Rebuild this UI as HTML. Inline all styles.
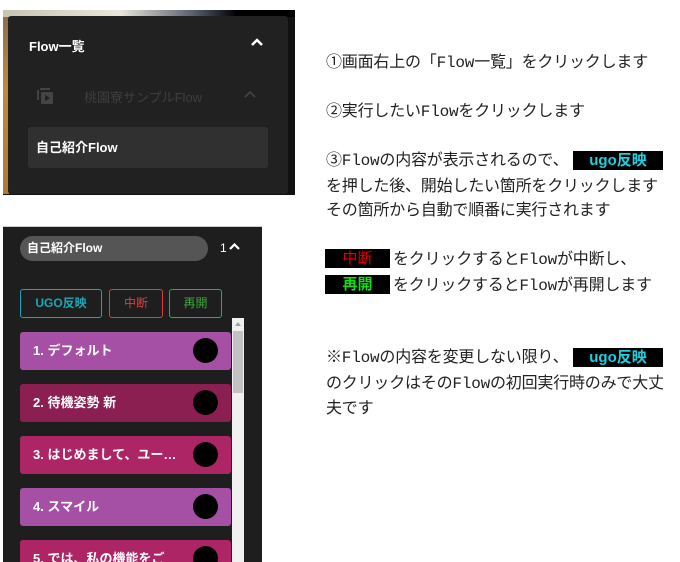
<!DOCTYPE html>
<html><head><meta charset="utf-8"><style>
*{margin:0;padding:0;box-sizing:border-box}
html,body{width:680px;height:562px;overflow:hidden}
body{background:#fff;position:relative;font-family:"Liberation Sans","Noto Sans CJK JP",sans-serif}
.abs{position:absolute}
.t{position:absolute;left:326px;font-family:"Liberation Mono","Noto Sans CJK JP",monospace;font-size:16px;color:#222;letter-spacing:-0.2px;white-space:nowrap;line-height:20px}
.tag{position:absolute;background:#000;font-family:"Liberation Sans","Noto Sans CJK JP",sans-serif;font-size:15px;text-align:center;line-height:19px;font-weight:bold}
.item{position:absolute;left:17px;width:211px;height:38px;border-radius:3px;color:#fff;font-size:13px;font-weight:bold;line-height:38px;padding-left:13px}
.item i{position:absolute;left:173px;top:6px;width:25px;height:25px;border-radius:50%;background:#000}
.btn{position:absolute;top:289px;height:29px;border:1px solid;border-radius:3px;font-size:12px;text-align:center;line-height:27px;font-weight:bold}
</style></head><body>
<div class="abs" style="left:3px;top:10px;width:292px;height:185px;background:#111"></div>
<div class="abs" style="left:3px;top:10px;width:292px;height:7px;background:linear-gradient(90deg,#c9c4b0,#e8e6dc 40%,#5a6070 65%,#000 80%)"></div>
<div class="abs" style="left:3px;top:17px;width:6px;height:177px;background:linear-gradient(#8a7050,#c08a3a 40%,#b07a30)"></div>
<div class="abs" style="left:8px;top:16px;width:280px;height:178px;background:#212121;border-radius:3px"></div>
<div class="abs" style="left:29px;top:36px;color:#fff;font-size:13px;font-weight:bold">Flow一覧</div>
<svg class="abs" style="left:250px;top:38px" width="14" height="10"><path d="M2 7 L7 2 L12 7" stroke="#fff" stroke-width="2.5" fill="none"/></svg>
<svg class="abs" style="left:36px;top:87px" width="18" height="18"><path d="M1 3v10h2V3zM4 1v2h10V1z" fill="#444"/><rect x="5" y="5" width="12" height="12" rx="1" fill="#444"/><path d="M9 8l5 3-5 3z" fill="#212121"/></svg>
<div class="abs" style="left:84px;top:87px;color:#3e3e3e;font-size:13px">桃園寮サンプルFlow</div>
<svg class="abs" style="left:244px;top:91px" width="12" height="8"><path d="M1 6 L6 1 L11 6" stroke="#444" stroke-width="1.6" fill="none"/></svg>
<div class="abs" style="left:28px;top:127px;width:240px;height:41px;background:#303030;border-radius:3px;color:#fff;font-size:13px;font-weight:bold;line-height:41px;padding-left:8px">自己紹介Flow</div>
<div class="abs" style="left:3px;top:226px;width:259px;height:336px;background:#1e1e1e;border-top:1px solid #ccc;overflow:hidden">
<div class="abs" style="left:17px;top:9px;width:188px;height:25px;background:#555;border-radius:13px;color:#fff;font-size:12px;font-weight:bold;line-height:25px;padding-left:7px">自己紹介Flow</div>
<div class="abs" style="left:217px;top:14px;color:#fff;font-size:12px">1</div>
<svg class="abs" style="left:226px;top:16px" width="11" height="8"><path d="M1 6 L5.5 1.5 L10 6" stroke="#fff" stroke-width="2.2" fill="none"/></svg>
<div class="btn" style="top:62px;left:17px;width:82px;border-color:#1ea5b5;color:#1ea5b5">UGO反映</div>
<div class="btn" style="top:62px;left:106px;width:54px;border-color:#d94040;color:#d94040;font-weight:normal">中断</div>
<div class="btn" style="top:62px;left:166px;width:53px;border-color:#3aa83a;color:#3aa83a;font-weight:normal">再開</div>
<div class="abs" style="left:229px;top:91px;width:12px;height:250px;background:#f0f0f0"></div>
<div class="abs" style="left:230px;top:104px;width:10px;height:62px;background:#c1c1c1"></div>
<svg class="abs" style="left:231px;top:94px" width="8" height="6"><path d="M1 5L4 1L7 5z" fill="#a0a0a0"/></svg>
<div class="item" style="top:105px;background:#a550a5">1. デフォルト<i></i></div>
<div class="item" style="top:157px;background:#8b1f52">2. 待機姿勢 新<i></i></div>
<div class="item" style="top:209px;background:#ae2566">3. はじめまして、ユー…<i></i></div>
<div class="item" style="top:261px;background:#a550a5">4. スマイル<i></i></div>
<div class="item" style="top:313px;background:#ae2566">5. では、私の機能をご<i></i></div>
</div>
<div class="t" style="top:53px">①画面右上の「Flow一覧」をクリックします</div>
<div class="t" style="top:102px">②実行したいFlowをクリックします</div>
<div class="t" style="top:151px">③Flowの内容が表示されるので、</div>
<div class="tag" style="left:573px;top:151px;width:90px;color:#1ecfe0">ugo反映</div>
<div class="t" style="top:177px">を押した後、開始したい箇所をクリックします</div>
<div class="t" style="top:201px">その箇所から自動で順番に実行されます</div>
<div class="tag" style="left:325px;top:249px;width:65px;color:#e00000;font-weight:normal">中断</div>
<div class="t" style="top:250px;left:393px">をクリックするとFlowが中断し、</div>
<div class="tag" style="left:325px;top:275px;width:65px;color:#10e010">再開</div>
<div class="t" style="top:276px;left:393px">をクリックするとFlowが再開します</div>
<div class="t" style="top:348px">※Flowの内容を変更しない限り、</div>
<div class="tag" style="left:573px;top:348px;width:90px;color:#1ecfe0">ugo反映</div>
<div class="t" style="top:374px">のクリックはそのFlowの初回実行時のみで大丈</div>
<div class="t" style="top:399px">夫です</div>
</body></html>
